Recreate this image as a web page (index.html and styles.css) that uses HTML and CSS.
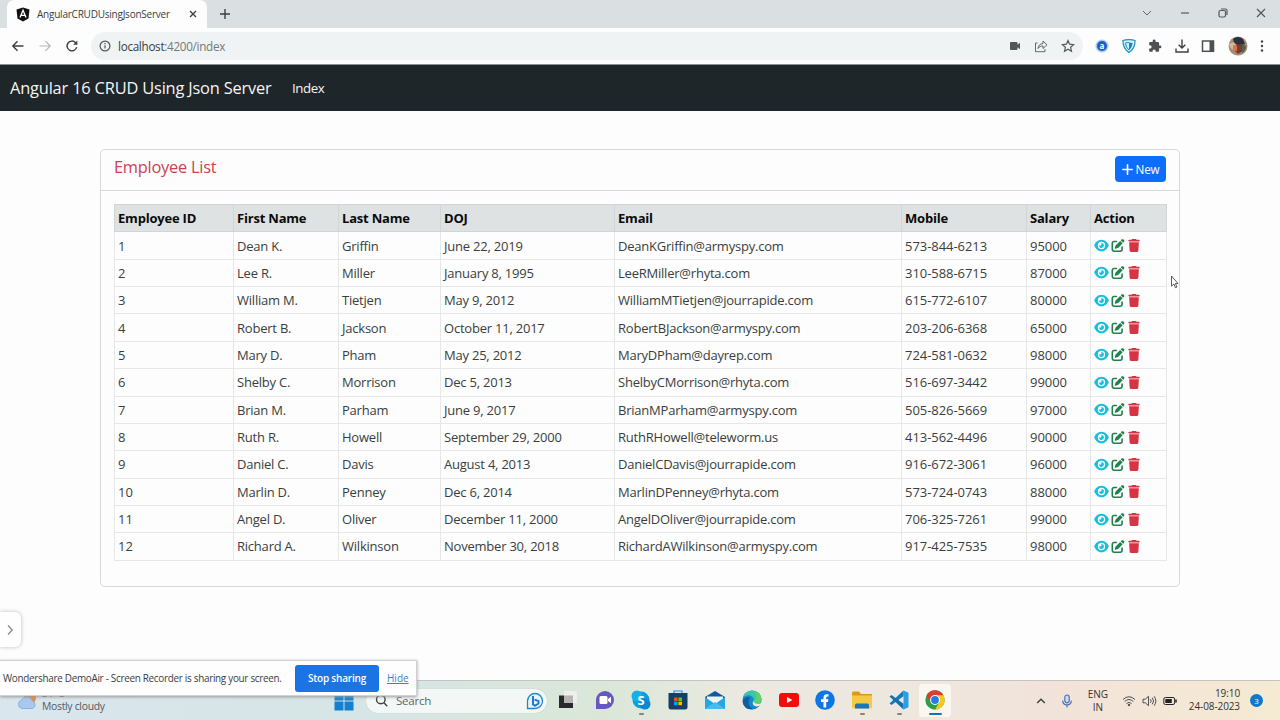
FILE: index.html
```html
<!DOCTYPE html>
<html lang="en">
<head>
    <meta charset="UTF-8">
    <meta name="viewport" content="width=device-width, initial-scale=1.0">
    <title>AngularCRUDUsingJsonServer</title>
    <link rel="stylesheet" href="styles.css">
</head>

<body>
    <svg class="sprite">
        <symbol id="eye" viewBox="0 0 576 512"><path fill-rule="evenodd" d="M288 32c-80 0-145 37-193 81C48 156 17 208 3 244c-4 8-4 16 0 24 14 36 45 88 92 131 48 44 113 81 193 81s145-37 193-81c47-43 78-95 92-131 4-8 4-16 0-24-14-36-45-88-92-131-48-44-113-81-193-81zM144 256a144 144 0 1 1 288 0 144 144 0 1 1-288 0zm144-64c0 35-29 64-64 64-7 0-14-1-20-3-6-2-12 2-12 7 0 7 1 14 3 21 14 51 67 82 118 68s82-67 68-118c-11-42-48-69-89-71-5 0-9 6-7 12 2 6 3 13 3 20z"/></symbol>
        <symbol id="edit" viewBox="0 0 512 512"><path d="M472 22c-22-22-58-22-80 0l-30 30 98 98 30-30c22-22 22-58 0-80l-18-18zM172 242c-6 6-11 13-14 22l-29 88c-3 9-1 19 6 25 7 7 16 9 25 6l88-29c8-3 16-8 22-14l168-168-98-98-168 168zM96 64c-53 0-96 43-96 96v256c0 53 43 96 96 96h256c53 0 96-43 96-96v-96c0-18-14-32-32-32s-32 14-32 32v96c0 18-14 32-32 32H96c-18 0-32-14-32-32V160c0-18 14-32 32-32h96c18 0 32-14 32-32s-14-32-32-32H96z"/></symbol>
        <symbol id="trash" viewBox="0 0 448 512"><path d="M135 18L128 32H32C14 32 0 46 0 64s14 32 32 32h384c18 0 32-14 32-32s-14-32-32-32h-96l-7-14C307 7 296 0 284 0H164c-12 0-23 7-29 18zM416 128H32l21 339c2 25 23 45 48 45h246c25 0 46-20 48-45l21-339z"/></symbol>
    </svg>

    <!-- Tab strip -->
    <div class="tabstrip">
        <div class="tab">
            <svg width="14" height="15" viewBox="0 0 14 15"><path d="M7 0.500L13.500 2.600 12.500 11.500 7 14.500 1.500 11.500 0.500 2.600z" fill="#111"/><path d="M4 10.500L7 3.200 10 10.500M5.100 8.300H8.900" fill="none" stroke="#fff" stroke-width="1.300"/></svg>
            <span class="tab-title">AngularCRUDUsingJsonServer</span>
            <svg width="8" height="8" viewBox="0 0 8 8" class="line dark"><path d="M1 1l6 6M7 1L1 7"/></svg>
        </div>
        <svg class="line dark new-tab" width="12" height="12" viewBox="0 0 12 12"><path d="M6 1v10M1 6h10"/></svg>
        <div class="window-buttons">
            <svg class="line thin" width="10" height="10" viewBox="0 0 10 10"><path d="M1 3l4 4 4-4"/></svg>
            <svg class="line" width="10" height="10" viewBox="0 0 10 10"><path d="M1 5h8"/></svg>
            <svg class="line" width="10" height="10" viewBox="0 0 10 10"><rect x="1" y="2.500" width="6.500" height="6.500" rx="1.500"/><path d="M3 1h4.500A1.500 1.500 0 0 1 9 2.500V7"/></svg>
            <svg class="line" width="10" height="10" viewBox="0 0 10 10"><path d="M1 1l8 8M9 1L1 9"/></svg>
        </div>
    </div>

    <!-- Address bar -->
    <div class="toolbar">
        <div class="nav-buttons">
            <svg class="line dark" width="14" height="14" viewBox="0 0 14 14"><path d="M12.500 7H2M6.500 2.200L1.800 7l4.700 4.800"/></svg>
            <svg class="line faded" width="14" height="14" viewBox="0 0 14 14"><path d="M1.500 7H12M7.500 2.200L12.200 7l-4.700 4.800"/></svg>
            <svg class="line dark" width="14" height="14" viewBox="0 0 14 14"><path d="M11.700 8.200A4.900 4.900 0 1 1 10.600 3.700L12 5.200"/><path d="M12.300 1.500v4.200H8.100z" fill="#444" stroke="none"/></svg>
        </div>
        <div class="address">
            <svg class="line" width="12" height="12" viewBox="0 0 12 12"><circle cx="6" cy="6" r="4.900"/><path d="M6 5.300v3.300M6 3v1.300"/></svg>
            <span class="url">localhost<em>:4200/index</em></span>
            <div class="address-icons">
                <svg width="12" height="10" viewBox="0 0 12 10"><path d="M1 2q0-1 1-1h5.500q1 0 1 1v1.700L11 1.800v6.400L8.500 6.300V8q0 1-1 1H2Q1 9 1 8z" fill="#555"/></svg>
                <svg class="line thin" width="14" height="14" viewBox="0 0 14 14"><path d="M3.500 4H1.500v8.700h9.500V10M4 9.500c.3-3 2-4.800 5-5V2l4 3.800-4 3.700V7c-2.300 0-3.700.7-5 2.500z"/></svg>
                <svg class="line" width="14" height="14" viewBox="0 0 14 14"><path d="M7 1.500l1.600 3.700 4 .4-3 2.700.9 4L7 10.200l-3.500 2.100.9-4-3-2.700 4-.4z"/></svg>
            </div>
        </div>
        <div class="extensions">
            <svg width="14" height="14" viewBox="0 0 14 14"><circle cx="7" cy="7" r="6.500" fill="#a9c8f2"/><circle cx="7" cy="7" r="5" fill="#1c5fc4"/><text x="7" y="9.700" class="ext-letter">a</text></svg>
            <svg width="14" height="14" viewBox="0 0 14 14"><path d="M1 1.500Q7-.3 13 1.500 13.200 9.500 7 13.400.8 9.500 1 1.500z" fill="#d8f1fb" stroke="#2596c9" stroke-width="1.300"/><path d="M7 3.500q2 0 3.500.5Q10.300 8.500 7 11z" fill="#1588bf"/><path d="M7 3.500q-2 0-3.500.5Q3.700 8.500 7 11" fill="none" stroke="#1588bf"/></svg>
            <svg width="14" height="14" viewBox="0 0 24 24"><path fill="#4d5154" d="M20.500 11H19V7c0-1.100-.9-2-2-2h-4V3.500a2.500 2.500 0 0 0-5 0V5H4c-1.100 0-2 .9-2 2v3.800h1.500a2.700 2.700 0 0 1 0 5.400H2V20c0 1.100.9 2 2 2h3.800v-1.500a2.700 2.700 0 0 1 5.400 0V22H17c1.100 0 2-.9 2-2v-4h1.500a2.500 2.500 0 0 0 0-5z"/></svg>
            <svg class="line dark" width="14" height="14" viewBox="0 0 14 14"><path d="M7 0.500v8.300M3.700 5.700L7 9l3.300-3.300M1 9.500v3.500h12V9.500"/></svg>
            <svg width="14" height="14" viewBox="0 0 14 14"><rect x="1.500" y="2" width="11" height="10.300" fill="none" stroke="#4d5154" stroke-width="1.500"/><path d="M8.500 2h4v10h-4z" fill="#4d5154"/></svg>
            <svg width="20" height="20" viewBox="0 0 20 20"><circle cx="10" cy="10" r="9.500" fill="#a58e78"/><path d="M5 3q5-4 10 0l2 5-5 2-6-3z" fill="#2c2f3e"/><path d="M1 8l5-2 2 4-2 4q-4-1-5-6z" fill="#cfb7a2"/><path d="M8 9l6-1 1 7-5 3-3-3z" fill="#7c3c2c"/><path d="M14 8l4 2q0 5-4 7z" fill="#53604f"/><path d="M5 9l4 1v5l-4-1z" fill="#e0704c"/></svg>
            <svg width="6" height="14" viewBox="0 0 6 14" fill="#444"><circle cx="3" cy="2.500" r="1.200"/><circle cx="3" cy="7" r="1.200"/><circle cx="3" cy="11.500" r="1.200"/></svg>
        </div>
    </div>

    <!-- Page -->
    <nav class="navbar">
        <span class="brand">Angular 16 CRUD Using Json Server</span>
        <span class="nav-link">Index</span>
    </nav>

    <main>
        <div class="card">
            <div class="card-header">
                <h5>Employee List</h5>
                <button><svg width="11" height="11" viewBox="0 0 11 11"><path d="M5.500 .8v9.400M.8 5.500h9.400" stroke="#fff" stroke-width="1.600" stroke-linecap="round"/></svg><span>New</span></button>
            </div>
            <table>
                <colgroup>
                    <col class="c-id"><col class="c-first"><col class="c-last"><col class="c-doj"><col class="c-email"><col class="c-mobile"><col class="c-salary"><col class="c-action">
                </colgroup>
                <thead>
                    <tr><th>Employee ID</th><th>First Name</th><th>Last Name</th><th>DOJ</th><th>Email</th><th>Mobile</th><th>Salary</th><th>Action</th></tr>
                </thead>
                <tbody id="employees"></tbody>
            </table>
        </div>
    </main>

    <!-- Taskbar -->
    <div class="taskbar">
        <div class="weather">
            <svg width="22" height="22" viewBox="0 0 22 22"><circle cx="14" cy="8" r="6" fill="#ef8c35"/><path d="M5.500 18.500a4.500 4.500 0 0 1 0-8.500 6 6 0 0 1 11 1 4 4 0 0 1 0 7.500z" fill="#a9c8f0" stroke="#7ca7e0" stroke-width=".8"/></svg>
            <div><span>31°C</span><span>Mostly cloudy</span></div>
        </div>
        <div class="start"><svg width="20" height="20" viewBox="0 0 20 20" fill="#1480cf"><path d="M.5.500h9v9h-9zM10.500.500h9v9h-9zM.5 10.500h9v9h-9zM10.500 10.500h9v9h-9z"/></svg></div>
        <div class="search">
            <svg class="line dark" width="13" height="13" viewBox="0 0 13 13"><circle cx="5.800" cy="5.500" r="4.300"/><path d="M8.900 8.700l3.300 3.500"/></svg>
            <span>Search</span>
            <svg width="18" height="18" viewBox="0 0 18 18"><path d="M1.500 16.500V9A7.500 7.500 0 1 1 9 16.500z" fill="#e6f4fc" stroke="#2386cf" stroke-width="1.300"/><path d="M7 4v8.500l2 1.200 3.500-2.200V9.200L8.500 7.500" fill="none" stroke="#1b6fd0" stroke-width="1.900" stroke-linejoin="round"/></svg>
        </div>
        <div class="apps">
            <div><svg viewBox="0 0 20 20"><path d="M1 5.500h14V18H1z" fill="#292929"/><path d="M6 1h13v12H6z" fill="#eeeeec"/><path d="M6 5.500h9V13H6z" fill="#b5b5b3"/></svg></div>
            <div><svg viewBox="0 0 20 20"><path d="M1 18.500V10A9 9 0 1 1 10 19H1z" fill="#6658bd"/><rect x="4.500" y="6" width="8" height="8" rx="1.500" fill="#fff"/><path d="M13 9l3-2.200v6.400L13 11z" fill="#fff"/></svg></div>
            <div class="running"><svg viewBox="0 0 20 20"><circle cx="10" cy="10" r="8.500" fill="#0a9ede"/><circle cx="6" cy="6" r="5.500" fill="#18aeea"/><circle cx="14" cy="14" r="5.500" fill="#0789d2"/><text x="10" y="14.600" class="skype-letter">S</text></svg></div>
            <div><svg viewBox="0 0 20 20"><path d="M6 4V1h8v3" fill="none" stroke="#2b90cd" stroke-width="1.200"/><path d="M.5 3h19v14q0 2.500-2.500 2.500H3Q.5 19.500.5 17z" fill="#173d69"/><path d="M6 7.500h3.600V11H6z" fill="#f05022"/><path d="M10.400 7.500H14V11h-3.600z" fill="#7fbb00"/><path d="M6 11.700h3.600v3.500H6z" fill="#00a1ef"/><path d="M10.400 11.700H14v3.500h-3.600z" fill="#ffb900"/></svg></div>
            <div><svg viewBox="0 0 20 20"><path d="M0 7l10-6 10 6v6H0z" fill="#125a9f"/><path d="M2 6.500h16V14H2z" fill="#edf6fb"/><path d="M0 7l10 7 10-7v12H0z" fill="#2aa5e3"/><path d="M0 19l10-7 10 7z" fill="#47bdef"/></svg></div>
            <div><svg viewBox="0 0 20 20"><circle cx="10" cy="10" r="9.500" fill="#1687cc"/><path d="M1 7Q3.500.500 10 .500q9 .5 9.500 9 0 4-5 4-4 0-3-2.500 1-4-3-5.500Q5 4.500 1 7z" fill="#3cc7a4"/><path d="M13 1q6 2 6.500 8.500 0 4-5 4-3 0-3-1.500 5-3 1.500-11z" fill="#61d06f"/><path d="M11.700 10Q9 15 13.500 16.300q3 .6 5.500-1.600l2-3q-2 2-5.500 2-5-.5-3.800-3.700z" fill="#edeae2"/><path d="M8 7Q4 15 11 19.300 2 20 .600 12 1 7 8 7z" fill="#105e9e"/></svg></div>
            <div><svg viewBox="0 0 20 20"><rect y="3" width="20" height="14" rx="3" fill="#f20d0d"/><path d="M8 7v6l5.300-3z" fill="#fff"/></svg></div>
            <div><svg viewBox="0 0 20 20"><circle cx="10" cy="10" r="9.800" fill="#0b76e4"/><path d="M8.500 17.500V12H6V9.300h2.500V7.500q0-4 5-3.200v2.300q-2.300-.4-2.300 1.200v1.500h2.200L13 12h-1.800v5.500z" fill="#fff"/></svg></div>
            <div class="running"><svg viewBox="0 0 20 20"><path d="M0 3q0-1.500 1.500-1.500H7L9 4h11v4H0z" fill="#d99a1c"/><path d="M0 5.500h20V17q0 1.500-1.500 1.500h-17Q0 18.500 0 17z" fill="#f6c944"/><path d="M3 18.500V15q0-1.500 1.500-1.500h11q1.500 0 1.500 1.500v3.500z" fill="#1976b9"/></svg></div>
            <div class="running"><svg viewBox="0 0 20 20"><path d="M14.500.500L19.500 2.800v14.400l-5 2.300z" fill="#27a0e8"/><path d="M14.500.500v5.700L2.500 15 .5 13.500z" fill="#127bc0"/><path d="M14.500 19.500v-5.700L2.500 5 .5 6.500z" fill="#1470ae"/></svg></div>
            <div class="running active"><svg viewBox="0 0 20 20"><circle cx="10" cy="10" r="9.700" fill="#2c9f4b"/><path d="M1.600 5.150A9.700 9.700 0 0 1 18.400 5.150H10L5.800 12.400z" fill="#df3c30"/><path d="M18.400 5.150A9.700 9.700 0 0 1 10 19.700l4.200-7.300L10 5.150z" fill="#f8c91c"/><circle cx="10" cy="10" r="4.900" fill="#fff"/><circle cx="10" cy="10" r="3.900" fill="#287ae5"/></svg></div>
        </div>
        <div class="tray">
            <svg class="line dark caret" width="10" height="8" viewBox="0 0 10 8"><path d="M1.200 6L5 2.200 8.800 6"/></svg>
            <svg class="line mic" width="12" height="14" viewBox="0 0 12 14"><rect x="3.800" y="1" width="4.400" height="7.800" rx="2.200" fill="#cfdcf2"/><path d="M1.700 6.500q0 4.300 4.300 4.300t4.300-4.300M6 11v2.500"/></svg>
            <div class="lang"><span>ENG</span><span>IN</span></div>
            <svg class="line dark thin" width="14" height="12" viewBox="0 0 14 12"><path d="M1 4.500q6-5.500 12 0M2.700 6.500q4.300-4 8.600 0M4.500 8.500q2.500-2.300 5 0"/><circle cx="7" cy="10" r=".8" fill="#333"/></svg>
            <svg class="line dark thin" width="15" height="12" viewBox="0 0 15 12"><path d="M1 4.200h2.300L6.500 1.300v9.400L3.300 7.800H1zM8.500 4.200q1.300 1.800 0 3.600M10.300 2.700q2.500 3.300 0 6.600M12.200 1.300q3.300 4.700 0 9.400"/></svg>
            <svg width="14" height="10" viewBox="0 0 14 10"><rect x=".8" y="1.500" width="10.800" height="7" rx="1.600" fill="none" stroke="#222"/><path d="M2.300 3h6.500v4H2.300z" fill="#222"/><path d="M13 3.600v2.800" stroke="#222" stroke-width="1.500"/></svg>
            <div class="clock"><span>19:10</span><span>24-08-2023</span></div>
            <span class="badge">3</span>
        </div>
    </div>

    <!-- Floating pieces over the page -->
    <div class="side-handle"><svg class="line" width="8" height="12" viewBox="0 0 8 12"><path d="M2 1.500L6.300 6 2 10.500"/></svg></div>
    <div class="share-bar">
        <span class="share-text">Wondershare DemoAir - Screen Recorder is sharing your screen.</span>
        <button>Stop sharing</button>
        <a>Hide</a>
    </div>
    <svg class="cursor" width="9" height="14" viewBox="0 0 9 14"><path d="M1.500 1v10.200L3.900 9l1.500 3.700 1.500-.6-1.500-3.600H8z" fill="#fff" stroke="#333" stroke-width=".8"/></svg>

    <script src="script.js"></script>
</body>

</html>
```

FILE: styles.css
```css
* {
    box-sizing: border-box;
}

body {
    margin: 0;
    width: 1280px;
    height: 720px;
    overflow: hidden;
    display: flex;
    flex-direction: column;
    position: relative;
    background: #fdfdfd;
    font-family: 'Open Sans', 'Noto Sans', sans-serif;
    font-size: 13px;
    color: #3a3d40;
}

svg {
    display: block;
    flex: none;
}

span {
    white-space: nowrap;
}

.sprite {
    display: none;
}

.line {
    fill: none;
    stroke: #55595c;
    stroke-width: 1.2;
}

.line.dark {
    stroke: #3c4043;
    stroke-width: 1.4;
}

.line.faded {
    stroke: #b4b8ba;
}

.line.thin {
    stroke-width: 0.9;
}

/* browser */
.tabstrip {
    flex: none;
    height: 28px;
    display: flex;
    align-items: center;
    background: #dadfe2;
    padding-left: 7px;
}

.tab {
    width: 200px;
    height: 28px;
    display: flex;
    align-items: center;
    padding: 0 10px 0 9px;
    background: #fdfdfd;
    border-radius: 7px 7px 0 0;
}

.tab-title {
    flex: 1;
    margin-left: 7px;
    font-size: 10px;
    letter-spacing: -0.23px;
}

.new-tab {
    margin-left: 12px;
}

.window-buttons {
    margin-left: auto;
    margin-right: 14px;
    display: flex;
    gap: 28px;
    padding-bottom: 3px;
}

.toolbar {
    flex: none;
    height: 36px;
    display: flex;
    align-items: center;
    background: #fdfdfd;
    padding-left: 11px;
}

.nav-buttons {
    display: flex;
    gap: 13px;
    width: 80px;
}

.address {
    width: 992px;
    height: 28px;
    border-radius: 14px;
    background: #f0f3f3;
    display: flex;
    align-items: center;
    padding: 0 8px;
}

.url {
    margin-left: 7px;
    font-size: 11.7px;
    letter-spacing: -0.3px;
}

.url em {
    font-style: normal;
    color: #74787a;
}

.address-icons {
    margin-left: auto;
    display: flex;
    align-items: center;
    gap: 13px;
}

.extensions {
    margin-left: 12px;
    display: flex;
    align-items: center;
    gap: 12.6px;
}

.extensions svg:last-child {
    margin-left: -2px;
}

.ext-letter,
.skype-letter {
    fill: #fff;
    font-weight: bold;
    text-anchor: middle;
    font-size: 8px;
}

.skype-letter {
    font-size: 13px;
}

/* page */
.navbar {
    flex: none;
    height: 47px;
    display: flex;
    align-items: center;
    gap: 20px;
    padding: 0 10px 1px;
    background: #1f262a;
    border-top: 1px solid #8b8f91;
    color: #f4f5f5;
}

.brand {
    width: 262px;
    font-size: 16.4px;
    letter-spacing: -0.18px;
}

.nav-link {
    font-size: 13.3px;
    letter-spacing: -0.4px;
}

main {
    flex: 1;
    padding: 38px 100px 0;
}

.card {
    height: 438px;
    border: 1px solid #d6d8d9;
    border-radius: 5px;
}

.card-header {
    height: 41px;
    display: flex;
    justify-content: space-between;
    padding: 6px 13px;
    border-bottom: 1px solid #d6d8d9;
}

h5 {
    margin: -1px 0 0;
    font-size: 16.4px;
    line-height: 24px;
    font-weight: 500;
    letter-spacing: -0.25px;
    color: #cf3f50;
}

.card-header button {
    width: 51px;
    height: 26px;
    display: flex;
    align-items: center;
    justify-content: center;
    gap: 3px;
    border: none;
    border-radius: 4px;
    background: #0d6efd;
    color: #fff;
    font-family: inherit;
    font-size: 11.7px;
    letter-spacing: -0.2px;
    padding: 0;
}

table {
    width: 1052px;
    margin: 13px 0 0 13px;
    table-layout: fixed;
    border-collapse: collapse;
}

.c-id { width: 119px; }
.c-first { width: 105px; }
.c-last { width: 102px; }
.c-doj { width: 174px; }
.c-email { width: 287px; }
.c-mobile { width: 125px; }
.c-salary { width: 64px; }
.c-action { width: 76px; }

th,
td {
    height: 27.36px;
    padding: 0 3px;
    border: 1px solid #e5e7e8;
    text-align: left;
    line-height: 20px;
    font-size: 13px;
    letter-spacing: -0.22px;
    white-space: nowrap;
}

td:nth-child(1),
td:nth-child(6),
td:nth-child(7) {
    letter-spacing: -0.05px;
}

th {
    background: #dfe2e3;
    border-color: #d2d5d6;
    color: #0a0b0c;
    font-weight: 700;
    letter-spacing: -0.2px;
}

.actions {
    display: flex;
    align-items: center;
    gap: 2px;
}

.eye { color: #16bfe0; fill: currentColor; }
.edit { color: #22804f; fill: currentColor; }
.trash { color: #d63343; fill: currentColor; margin-left: 1px; }

/* taskbar */
.taskbar {
    flex: none;
    height: 40px;
    display: grid;
    grid-template-columns: 326px 36px 187.5px 405px 1fr;
    align-items: center;
    border-top: 1px solid #c2c5c4;
    background: linear-gradient(90deg, #d9e6ee, #d6e5e5 30%, #dae7d8 47%, #ebe9e1 58%, #efe7de 72%, #f2e3da 82%, #f5ead2);
}

.weather {
    display: flex;
    align-items: center;
    padding-left: 16px;
    gap: 4px;
    font-size: 10.4px;
    line-height: 13px;
    letter-spacing: -0.3px;
    color: #55595c;
}

.weather div,
.lang,
.clock {
    display: flex;
    flex-direction: column;
}

.weather div {
    padding-bottom: 1px;
}

.start {
    display: flex;
    justify-content: center;
}

.search {
    height: 24px;
    margin: 0 3px 0 4px;
    padding: 0 3px 0 9px;
    display: flex;
    align-items: center;
    border-radius: 12px;
    background: #f3f8f6;
    box-shadow: 0 0 1px #aab3b0;
}

.search span {
    flex: 1;
    margin-left: 8px;
    font-size: 11.6px;
    letter-spacing: -0.25px;
    color: #606466;
}

.apps {
    height: 39px;
    display: grid;
    grid-template-columns: repeat(11, 36.8px);
}

.apps div {
    display: flex;
    flex-direction: column;
    align-items: center;
    padding-top: 9px;
    gap: 3px;
}

.apps svg {
    width: 20px;
    height: 20px;
}

.running::after {
    content: "";
    width: 5px;
    height: 2px;
    border-radius: 1px;
    background: #858583;
}

.apps .active {
    margin: 3px 3px 3px 2px;
    padding-top: 6px;
    border-radius: 4px;
    background: #faf7f2;
}

.active::after {
    width: 13px;
    background: #1c70ab;
}

.tray {
    display: flex;
    align-items: center;
    justify-content: flex-end;
    gap: 6px;
    padding-right: 17px;
    font-size: 10px;
    line-height: 13px;
    letter-spacing: -0.1px;
    color: #333;
}

.caret {
    margin-right: 9px;
}

.mic {
    margin-right: 9px;
    stroke: #4d74b5;
}

.lang {
    align-items: center;
    margin-right: 8px;
}

.clock {
    align-items: flex-end;
    margin-left: 6px;
    padding-bottom: 1px;
}

.badge {
    width: 13px;
    height: 13px;
    margin-left: 4px;
    border-radius: 50%;
    background: #0f78c8;
    color: #fff;
    font-size: 8px;
    text-align: center;
}

/* overlays */
.side-handle {
    position: absolute;
    left: 0;
    top: 612px;
    width: 21px;
    height: 35px;
    display: flex;
    align-items: center;
    padding-left: 6px;
    border-radius: 0 6px 6px 0;
    background: #fefefe;
    box-shadow: 0 0 4px #bbb;
}

.side-handle svg {
    stroke: #85898b;
}

.share-bar {
    position: absolute;
    left: 0;
    top: 660px;
    width: 417px;
    height: 36px;
    display: flex;
    align-items: center;
    padding-left: 3px;
    background: #fefefe;
    border: 1px solid #d0d2d2;
    border-left: none;
    box-shadow: 0 1px 3px #999;
    font-size: 10px;
}

.share-text {
    width: 292px;
    font-size: 9.9px;
    letter-spacing: -0.28px;
}

.share-bar button {
    width: 84px;
    height: 27px;
    padding: 0;
    border: none;
    border-radius: 3px;
    background: #1b73e4;
    color: #fff;
    font: 600 10px 'Open Sans', sans-serif;
    letter-spacing: -0.2px;
}

.share-bar a {
    margin-left: 8px;
    color: #3b7fdb;
    text-decoration: underline;
}

.cursor {
    position: absolute;
    left: 1170px;
    top: 275px;
}
```

FILE: script.js
```js
const employees = [
    ['1', 'Dean K.', 'Griffin', 'June 22, 2019', 'DeanKGriffin@armyspy.com', '573-844-6213', '95000'],
    ['2', 'Lee R.', 'Miller', 'January 8, 1995', 'LeeRMiller@rhyta.com', '310-588-6715', '87000'],
    ['3', 'William M.', 'Tietjen', 'May 9, 2012', 'WilliamMTietjen@jourrapide.com', '615-772-6107', '80000'],
    ['4', 'Robert B.', 'Jackson', 'October 11, 2017', 'RobertBJackson@armyspy.com', '203-206-6368', '65000'],
    ['5', 'Mary D.', 'Pham', 'May 25, 2012', 'MaryDPham@dayrep.com', '724-581-0632', '98000'],
    ['6', 'Shelby C.', 'Morrison', 'Dec 5, 2013', 'ShelbyCMorrison@rhyta.com', '516-697-3442', '99000'],
    ['7', 'Brian M.', 'Parham', 'June 9, 2017', 'BrianMParham@armyspy.com', '505-826-5669', '97000'],
    ['8', 'Ruth R.', 'Howell', 'September 29, 2000', 'RuthRHowell@teleworm.us', '413-562-4496', '90000'],
    ['9', 'Daniel C.', 'Davis', 'August 4, 2013', 'DanielCDavis@jourrapide.com', '916-672-3061', '96000'],
    ['10', 'Marlin D.', 'Penney', 'Dec 6, 2014', 'MarlinDPenney@rhyta.com', '573-724-0743', '88000'],
    ['11', 'Angel D.', 'Oliver', 'December 11, 2000', 'AngelDOliver@jourrapide.com', '706-325-7261', '99000'],
    ['12', 'Richard A.', 'Wilkinson', 'November 30, 2018', 'RichardAWilkinson@armyspy.com', '917-425-7535', '98000']
];

const actions = `<td><div class="actions">
    <svg class="eye" width="15" height="13"><use href="#eye"/></svg>
    <svg class="edit" width="14" height="13"><use href="#edit"/></svg>
    <svg class="trash" width="12" height="13"><use href="#trash"/></svg>
</div></td>`;

document.getElementById('employees').innerHTML = employees.map(employee =>
    `<tr>${employee.map(value => `<td>${value}</td>`).join('')}${actions}</tr>`
).join('');
```
